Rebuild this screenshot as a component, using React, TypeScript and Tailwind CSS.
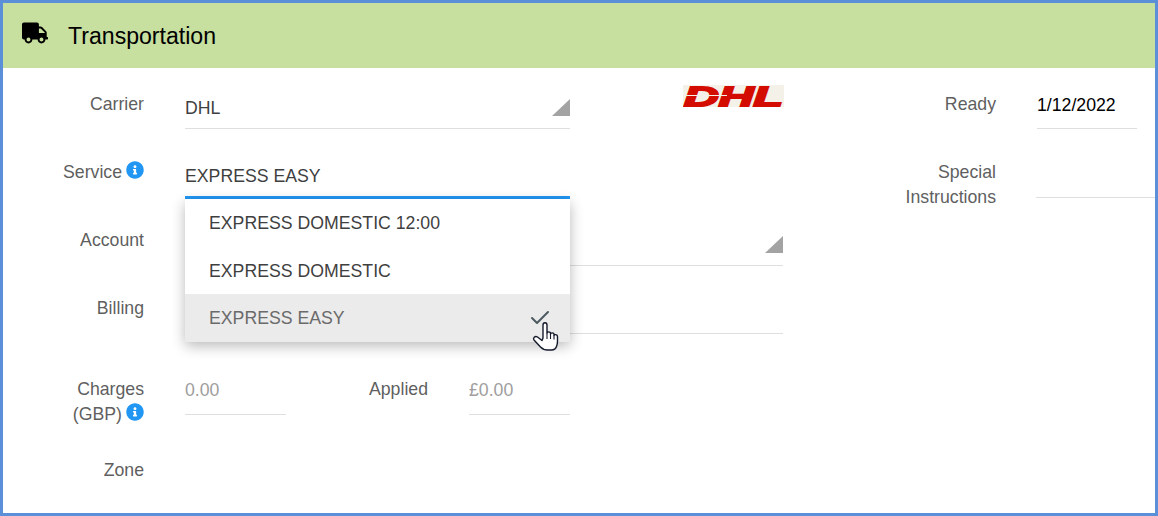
import { ReactNode } from 'react'
import { FaTruck, FaInfoCircle } from 'react-icons/fa'
import { Check } from 'lucide-react'

function Corner() {
  return (
    <svg width="18" height="17" viewBox="0 0 18 17" className="absolute right-0 bottom-[12px]">
      <polygon points="18,0 18,17 0,17" fill="#a3a3a3" />
    </svg>
  )
}

function Info() {
  return <FaInfoCircle className="inline-block ml-[4px] text-[18px] text-[#2196f3] align-[-1px]" />
}

function Label({ children, className = '' }: { children: ReactNode; className?: string }) {
  return <div className={`w-[141px] shrink-0 text-right text-[#5f5f5f] leading-[25px] ${className}`}>{children}</div>
}

function DhlLogo() {
  return (
    <div className="absolute left-[680px] top-[13px]">
      <svg width="101" height="32" viewBox="0 0 101 32" className="block">
        <rect y="4" width="101" height="22" fill="#f3f1e8" />
        <text
          x="50.500"
          y="24.500"
          textAnchor="middle"
          fontFamily="Liberation Sans"
          fontWeight="700"
          fontStyle="italic"
          fontSize="27"
          textLength="99"
          lengthAdjust="spacingAndGlyphs"
          fill="#d40c00"
          stroke="#d40c00"
          strokeWidth="1.8"
        >
          DHL
        </text>
        <path d="M0 14.500h44" stroke="#f3f1e8" strokeWidth="1.2" />
      </svg>
    </div>
  )
}

function ServiceMenu() {
  return (
    <div className="absolute left-[182px] top-[131px] w-[385px] z-10 bg-white rounded-b-[3px] shadow-[0_4px_14px_rgba(0,0,0,0.28)] text-[#3f3f3f]">
      <div className="h-[48px] pl-[24px] flex items-center">EXPRESS DOMESTIC 12:00</div>
      <div className="h-[47px] pl-[24px] pt-[1px] flex items-center">EXPRESS DOMESTIC</div>
      <div className="h-[48px] pl-[24px] pr-[18px] flex items-center justify-between bg-[#ebebeb] text-[#6a6a6a]">
        EXPRESS EASY
        <Check size={24} strokeWidth={2} className="text-[#4d5a60]" />
      </div>
    </div>
  )
}

function HandCursor() {
  return (
    <svg width="30" height="36" viewBox="0 0 30 36" className="absolute left-[527px] top-[250px] z-20">
      <path
        d="M13 20V7c0-3 4-3 4 0V15c0-1.500 3.500-1.500 3.500 0v1c0-1.500 3.500-1.500 3.500 0v1.500c0-1.500 3.500-1 3.500 1v5c0 2-.5 3.500-1 5-.7 2-2.500 3.500-5 3.500h-4c-3 0-5-1-7-3l-6.500-7c-1.500-2 1-4.500 3.500-3l4.500 3.500z"
        fill="#fff"
        stroke="#151a2c"
        strokeWidth="1.4"
        strokeLinejoin="round"
      />
      <path d="M17 15v6M20.500 16v5M24 17.500v4" stroke="#151a2c" strokeWidth="1.1" fill="none" />
    </svg>
  )
}

export default function App() {
  return (
    <div className="w-[1158px] h-[516px] border-[3px] border-[#5b90d8] bg-white overflow-hidden font-['Liberation_Sans',Arial,sans-serif] text-[17.7px] text-[#3f3f3f]">
      <div className="h-[65px] bg-[#c7df9f] flex items-center pl-[19px] text-black">
        <FaTruck className="text-[26px] mb-[5px]" />
        <span className="ml-[20px] text-[23.1px] mt-[2px]">Transportation</span>
      </div>

      <div className="relative flex">
        <DhlLogo />
        <ServiceMenu />
        <HandCursor />

        <div className="w-[780px] shrink-0">
          <div className="h-[61px] flex pt-[24px]">
            <Label>Carrier</Label>
            <div className="relative ml-[41px] w-[385px] h-[37px] border-b border-[#dfdfdf] pt-[3px]">
              DHL
              <Corner />
            </div>
          </div>

          <div className="h-[70px] flex">
            <Label className="mt-[31px]">
              Service
              <Info />
            </Label>
            <div className="ml-[41px] w-[385px] h-[70px] border-b-[3px] border-[#2196f3] pt-[34px]">EXPRESS EASY</div>
          </div>

          <div className="h-[67px] flex">
            <Label className="mt-[29px]">Account</Label>
            <div className="relative ml-[41px] w-[598px] h-[67px] border-b border-[#dfdfdf]">
              <Corner />
            </div>
          </div>

          <div className="h-[68px] flex">
            <Label className="mt-[30px]">Billing</Label>
            <div className="ml-[41px] w-[598px] h-[68px] border-b border-[#dfdfdf]" />
          </div>

          <div className="h-[81px] flex pt-[43px]">
            <Label>
              Charges
              <br />
              (GBP)
              <Info />
            </Label>
            <div className="ml-[41px] w-[101px] h-[38px] border-b border-[#dfdfdf] text-[#9e9e9e]">0.00</div>
            <div className="w-[142px] text-right text-[#5f5f5f] leading-[25px]">Applied</div>
            <div className="ml-[41px] w-[101px] h-[38px] border-b border-[#dfdfdf] text-[#9e9e9e]">£0.00</div>
          </div>

          <div className="flex pt-[43px]">
            <Label>Zone</Label>
          </div>
        </div>

        <div className="flex-1">
          <div className="flex pt-[24px] h-[61px]">
            <div className="w-[213px] shrink-0 text-right text-[#5f5f5f] leading-[25px]">Ready</div>
            <div className="ml-[41px] w-[100px] h-[37px] border-b border-[#dfdfdf] text-black">1/12/2022</div>
          </div>
          <div className="flex pt-[31px]">
            <div className="w-[213px] shrink-0 text-right text-[#5f5f5f] leading-[25px]">
              Special
              <br />
              Instructions
            </div>
            <div className="ml-[40px] flex-1 h-[38px] border-b border-[#dfdfdf]" />
          </div>
        </div>
      </div>
    </div>
  )
}
